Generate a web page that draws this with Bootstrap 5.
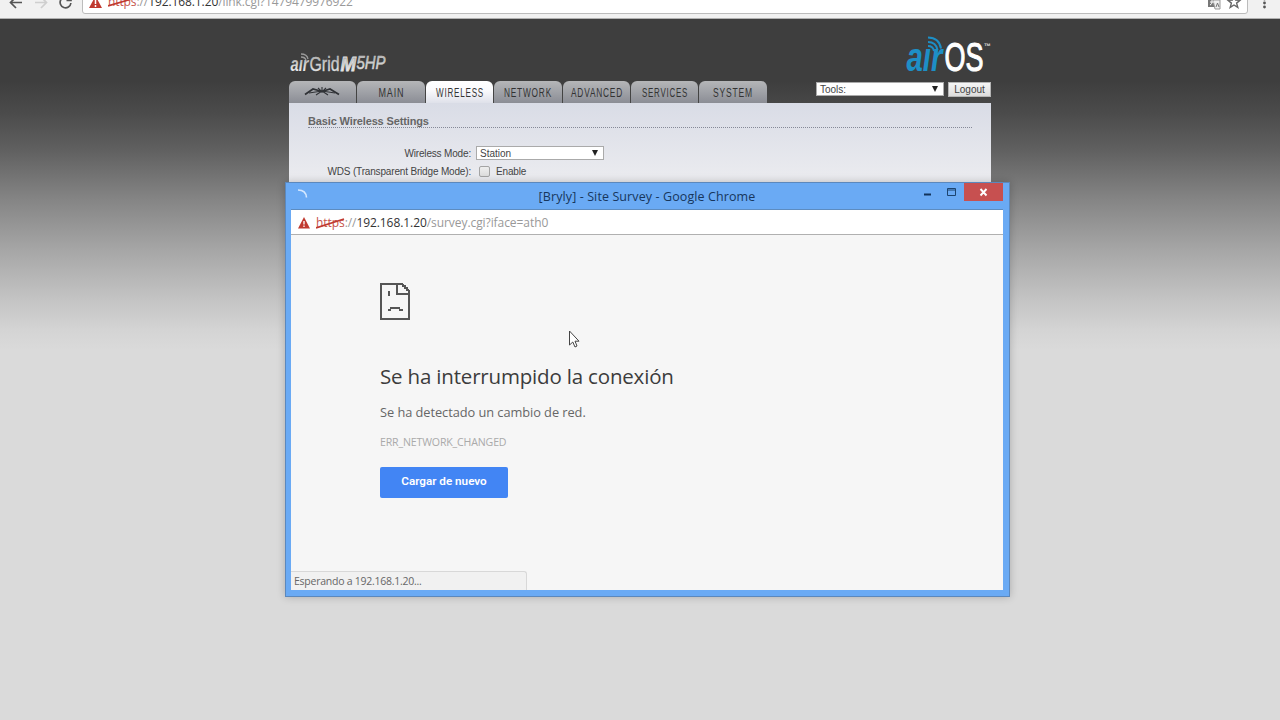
<!DOCTYPE html>
<html lang="es">
<head>
<meta charset="utf-8">
<title>airOS - Wireless</title>
<link href="https://cdn.jsdelivr.net/npm/bootstrap@5.3.0/dist/css/bootstrap.min.css" rel="stylesheet">
<style>
body{height:720px;background:#dadada;font-family:"Liberation Sans",Arial,sans-serif;font-size:10px;color:#444;line-height:1}
.segoe{font-family:"Open Sans","Noto Sans",sans-serif}
.browser-bar{height:19px;background:#f1f1f1;border-bottom:1px solid #b0b0b0}
.bar-inner{height:33px;margin-top:-15px}
.omnibox{width:1166px;height:29px;margin-left:8px;border:1px solid #bcbcbc;border-radius:3px;padding:8px 5px 0 6px}
.url{font-size:12px;color:#999;white-space:pre;line-height:16px;letter-spacing:-.07px}
.browser-bar .url{letter-spacing:-.1px;padding-left:2px}
.url b{font-weight:400;color:#333}
.bad{color:#c5524a;position:relative}
.bad svg{position:absolute;left:0;top:3px}
.page-bg{height:701px;background:linear-gradient(#3e3e3e 0,#3e3e3e 62px,#4b4b4b 94px,#606060 131px,#858585 181px,#a6a6a6 231px,#c4c4c4 281px,#d4d4d4 311px,#dadada 331px,#dadada 100%)}
.router{width:702px;margin-left:289px}
.masthead{height:62px}
.tab-item{width:67.4px;height:22px;margin-right:1px;border-radius:6px 6px 0 0;background:linear-gradient(#b5b6b8,#a2a4a9 45%,#8b8d95)}
.tab-item.active{background:linear-gradient(#fff,#fbfbfd 40%,#dfe1ea)}
.tab-item svg{display:block}
.tab-item text{font:12.500px "Liberation Sans",sans-serif;letter-spacing:1.200px;fill:#333}
.tools-select{width:128px;height:14px;background:#fff;border:1px solid #aaa;padding:1px 5px 0 3px;white-space:nowrap}
.arrow{width:0;height:0;border:3px solid transparent;border-top:6px solid #222;border-bottom:0;margin-top:-2px}
.head-tools{padding-top:1px}
.logout{width:43px;height:15px;margin-left:4px;background:linear-gradient(#f6f6f6,#dcdcdc);border:1px solid #b5b5b5}
.settings{height:90px;background:linear-gradient(#d9dce6,#eeeef1);padding:12px 19px 0 19px}
.settings h1{font-size:11px;font-weight:700;color:#666;letter-spacing:-.14px;height:13px;margin:0;line-height:12px;border-bottom:1px dotted #858997}
.field-label{width:163px;text-align:right;white-space:nowrap;letter-spacing:-.17px;padding-top:1px}
.field-gap{margin-left:5px}
.check-box{width:11px;height:11px;border:1px solid #a4a4a4;border-radius:2px;background:linear-gradient(#eee,#ddd);margin:0 6px 0 8px}
.check-text{letter-spacing:-.17px;padding-top:1px}
.popup{left:285px;top:182px;width:725px;height:415px;background:#6aaaf4;border:1px solid #5b88bd;box-shadow:0 0 8px rgba(0,0,0,.22);padding:0 6px 6px 5px}
.titlebar{height:27px}
.titlebar .caption{font-size:12.500px;letter-spacing:.1px;color:#17365c;line-height:27px;white-space:nowrap}
.winbtns{right:6px;top:0}
.close-btn{width:39px;height:18px;background:#c75050}
.address{height:26px;background:#fff;border-bottom:1px solid #b0b0b0;border-top:1px solid #5d8cc0;padding:1px 0 0 7px;margin-top:-1px}
.error{height:355px;background:#f6f6f6;padding:47px 0 0 89px}
.error h2{font-size:20.500px;font-weight:400;color:#3c3c3c;letter-spacing:-.18px;margin:42px 0 0;line-height:26px;white-space:nowrap}
.error p{font-size:12.800px;letter-spacing:-.05px;color:#666;margin:14px 0 0;line-height:18px}
.error .code{font-size:10.600px;letter-spacing:-.16px;color:#aaa;margin-top:14px;line-height:14px}
.reload{width:128px;height:31px;background:#4285f4;color:#fff;border-radius:2px;border:0;font-size:11.700px;font-weight:600;margin-top:18px;padding:0 0 2px;display:block;font-family:Roboto,"Liberation Sans",sans-serif}
.status{left:5px;bottom:6px;width:236px;height:19px;background:#f1f1f1;border:1px solid #d8d8d8;border-left:0;border-bottom:0;border-radius:0 3px 0 0;padding-left:3px;font-size:10.500px;letter-spacing:-.25px;line-height:18px;color:#666}
.cursor{left:568px;top:330px}
</style>
<script src="https://cdn.jsdelivr.net/npm/bootstrap@5.3.0/dist/js/bootstrap.bundle.min.js"></script>
</head>
<body class="overflow-hidden position-relative">
<header class="browser-bar overflow-hidden">
  <div class="bar-inner d-flex">
    <svg width="74" height="33" fill="none" stroke="#555" stroke-width="1.7">
      <path d="M22 17.500H10.500M16 12l-5.500 5.500 5.500 5.500"/>
      <path stroke="#cfcfcf" d="M35 17.500h11M41 12l5.500 5.500-5.500 5.500"/>
      <path d="M69.300 13.500a5.400 5.400 0 1 0 1.600 4.500M71 11.500v4h-4.500"/>
    </svg>
    <div class="omnibox bg-white d-flex segoe">
      <svg width="13" height="16" class="me-1"><path d="M6.500 2L13 14H0z" fill="#c0392f"/><path d="M6.500 6v4M6.500 11v2" stroke="#fff" stroke-width="1.500"/></svg>
      <span class="url"><span class="bad">https<svg width="29" height="12"><path d="M0 10L27 2" stroke="#c0392f" stroke-width="1.700"/></svg></span>://<b>192.168.1.20</b>/link.cgi?1479479976922</span>
      <svg class="ms-auto" width="38" height="18" fill="none"><path d="M4 3h8v10H4z" fill="#777"/><path d="M9 6h7v9h-5z" fill="#eee" stroke="#999"/><path d="M6 8h4M8 6c0 3 0 4-2 5" stroke="#fff"/><path d="M12 13l1.500-4 1.500 4" stroke="#777"/><path d="M30 2l1.600 4 4.400.3-3.400 2.800 1.200 4.300L30 11l-3.800 2.400 1.200-4.300L24 6.300l4.400-.3z" stroke="#666" stroke-width="1.400"/></svg>
    </div>
    <svg width="30" height="33" fill="#555"><circle cx="16.500" cy="14" r="1.400"/><circle cx="16.500" cy="18" r="1.400"/><circle cx="16.500" cy="22" r="1.400"/></svg>
  </div>
</header>
<main class="page-bg">
  <div class="router">
    <div class="masthead d-flex justify-content-between">
      <svg width="110" height="62" font-family="Liberation Sans,sans-serif">
        <defs><linearGradient id="silver" x1="0" y1="0" x2="0" y2="1"><stop offset="0" stop-color="#999"/><stop offset="1" stop-color="#fff"/></linearGradient></defs>
        <g fill="url(#silver)">
          <text x="1.500" y="52" font-size="20" font-weight="700" font-style="italic" textLength="18" lengthAdjust="spacingAndGlyphs">aır</text>
          <text x="20.500" y="52" font-size="20.500" textLength="30" lengthAdjust="spacingAndGlyphs" stroke="#c4c4c4" stroke-width=".4">Grid</text>
          <text x="51.500" y="52" font-size="20" font-weight="700" font-style="italic" textLength="15.500" lengthAdjust="spacingAndGlyphs" stroke="#ddd" stroke-width=".8">M</text>
          <text x="67.500" y="49.500" font-size="18.500" font-style="italic" textLength="29" lengthAdjust="spacingAndGlyphs" stroke="#c4c4c4" stroke-width=".6">5HP</text>
        </g>
        <path d="M12 38q4 0 5 3M12 35q6 0 7 5" fill="none" stroke="#999" stroke-width="1.300"/>
      </svg>
      <svg width="90" height="62" font-family="Liberation Sans,sans-serif">
        <text x="5.500" y="52" font-size="40" font-weight="700" font-style="italic" fill="#1d8fc6" textLength="36" lengthAdjust="spacingAndGlyphs">aır</text>
        <path d="M27 27q5 0 6 5M27 23q8 0 9.500 8M27 18.500q11 0 13 11" fill="none" stroke="#1d8fc6" stroke-width="2"/>
        <text x="43.500" y="52" font-size="41" fill="#fff" stroke="#fff" stroke-width="1.100" textLength="39" lengthAdjust="spacingAndGlyphs">OS</text>
        <text x="83" y="30" font-size="8" font-weight="700" fill="#ddd" textLength="7" lengthAdjust="spacingAndGlyphs">™</text>
      </svg>
    </div>
    <nav class="d-flex">
      <div class="tab-item"><svg width="67" height="22" fill="none" stroke="#303236"><path d="M16 13.500l8-5.500 9 2.500" stroke-width="1.800"/><path d="M50 13.500l-9-5.500-8 2.500" stroke-width="1.800"/><path d="M20 12l13-2 13 2M33 10l-6 4M33 10l6 4M33 6v5M29 7l4 4 4-4" stroke-width="1.100"/></svg></div>
      <div class="tab-item"><svg width="67" height="22"><text x="21.500" y="16" textLength="26" lengthAdjust="spacingAndGlyphs">MAIN</text></svg></div>
      <div class="tab-item active"><svg width="67" height="22"><text x="10" y="16" textLength="48" lengthAdjust="spacingAndGlyphs">WIRELESS</text></svg></div>
      <div class="tab-item"><svg width="67" height="22"><text x="10" y="16" textLength="48" lengthAdjust="spacingAndGlyphs">NETWORK</text></svg></div>
      <div class="tab-item"><svg width="67" height="22"><text x="8" y="16" textLength="52" lengthAdjust="spacingAndGlyphs">ADVANCED</text></svg></div>
      <div class="tab-item"><svg width="67" height="22"><text x="11" y="16" textLength="46" lengthAdjust="spacingAndGlyphs">SERVICES</text></svg></div>
      <div class="tab-item"><svg width="67" height="22"><text x="14" y="16" textLength="40" lengthAdjust="spacingAndGlyphs">SYSTEM</text></svg></div>
      <div class="head-tools d-flex ms-auto align-items-start">
        <div class="tools-select d-flex align-items-center justify-content-between">Tools:<span class="arrow"></span></div>
        <div class="logout d-flex align-items-center justify-content-center">Logout</div>
      </div>
    </nav>
    <section class="settings">
      <h1>Basic Wireless Settings</h1>
      <div class="d-flex align-items-center" style="margin-top:18px">
        <span class="field-label">Wireless Mode:</span>
        <div class="tools-select field-gap d-flex align-items-center justify-content-between">Station<span class="arrow"></span></div>
      </div>
      <div class="d-flex align-items-center" style="margin-top:6px">
        <span class="field-label">WDS (Transparent Bridge Mode):</span>
        <span class="check-box"></span><span class="check-text">Enable</span>
      </div>
    </section>
  </div>
</main>
<section class="popup position-absolute">
  <div class="titlebar d-flex justify-content-center segoe">
    <span class="caption">[Bryly] - Site Survey - Google Chrome</span>
    <svg class="position-absolute" style="left:11px;top:5px" width="14" height="14"><path d="M1 2q8 0 8.500 7.500" fill="none" stroke="#d5e8ff" stroke-width="1.600"/></svg>
    <div class="winbtns position-absolute d-flex">
      <svg width="46" height="18" fill="none"><path d="M6 11.500h7" stroke="#12335a" stroke-width="2"/><path d="M29.500 5.500h8v7h-8zM29.500 7h8" stroke="#1d446f"/></svg>
      <div class="close-btn"><svg width="39" height="18"><path d="M16.500 6l6 6.500M22.500 6l-6 6.500" stroke="#fff" stroke-width="1.900"/></svg></div>
    </div>
  </div>
  <div class="address d-flex align-items-center segoe">
    <svg width="12" height="12"><path d="M6 0l6 11.500H0z" fill="#c0392f"/><path d="M6 4v3.500M6 8.500v1.500" stroke="#fff" stroke-width="1.300"/></svg>
    <span class="url" style="margin-left:6px"><span class="bad">https<svg width="29" height="12"><path d="M0 11L28 2" stroke="#c0392f" stroke-width="1.700"/></svg></span>://<b>192.168.1.20</b>/survey.cgi?iface=ath0</span>
  </div>
  <div class="error segoe">
    <svg class="d-block" width="30" height="39" fill="none" stroke="#555" stroke-width="2"><path d="M23 2H1v35h28V8M17 2v10h12M23 2v2h2v2h2v2h2M9 9v5M8 28h3M10 26h10M19 28h4"/></svg>
    <h2>Se ha interrumpido la conexión</h2>
    <p>Se ha detectado un cambio de red.</p>
    <p class="code">ERR_NETWORK_CHANGED</p>
    <button class="reload">Cargar de nuevo</button>
  </div>
  <div class="status position-absolute segoe">Esperando a 192.168.1.20...</div>
</section>
<svg class="cursor position-absolute" width="12" height="19"><path d="M1.500 1v14l3.300-3 2.200 5 2-1-2-4.800h4z" fill="#fff" stroke="#444"/></svg>
</body>
</html>
